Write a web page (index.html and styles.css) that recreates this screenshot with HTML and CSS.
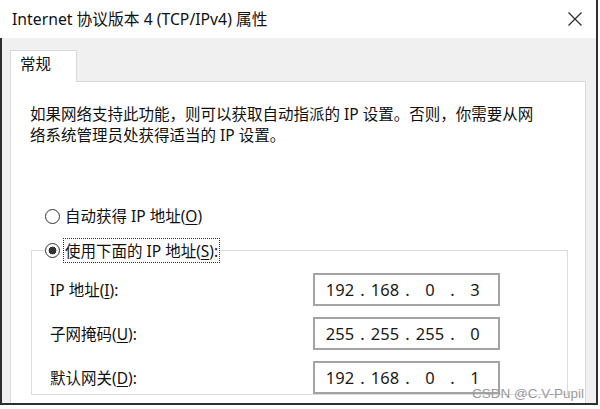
FILE: index.html
```html
<!DOCTYPE html>
<html lang="zh-CN">
<head>
<meta charset="utf-8">
<title>Internet 协议版本 4 (TCP/IPv4) 属性</title>
<link rel="stylesheet" href="styles.css">
</head>
<body>
<div class="window">
  <div class="titlebar">
    <span class="title">Internet 协议版本 4 (TCP/IPv4) 属性</span>
    <svg class="close" width="14" height="14" viewBox="0 0 14 14" aria-hidden="true">
      <path d="M0.5 0.5 L13.5 13.5 M13.5 0.5 L0.5 13.5" stroke="#2a2a2a" stroke-width="1.2" fill="none"/>
    </svg>
  </div>
  <div class="body">
    <div class="tabs"><div class="tab">常规</div></div>
    <div class="panel">
      <p class="desc">如果网络支持此功能，则可以获取自动指派的 IP 设置。否则，你需要从网<br>络系统管理员处获得适当的 IP 设置。</p>
      <div class="radio-row first">
        <span class="radio"></span><span class="radio-label">自动获得 IP 地址(<u>O</u>)</span>
      </div>
      <fieldset class="group">
        <legend class="legend">
          <span class="radio-row"><span class="radio checked"></span><span class="radio-label focus">使用下面的 IP 地址(<u>S</u>):</span></span>
        </legend>
        <div class="fields">
          <span class="field-label">IP 地址(<u>I</u>):</span>
          <div class="ip-box"><span class="oct">192</span><span class="dot">.</span><span class="oct">168</span><span class="dot">.</span><span class="oct">0</span><span class="dot">.</span><span class="oct">3</span></div>
          <span class="field-label">子网掩码(<u>U</u>):</span>
          <div class="ip-box"><span class="oct">255</span><span class="dot">.</span><span class="oct">255</span><span class="dot">.</span><span class="oct">255</span><span class="dot">.</span><span class="oct">0</span></div>
          <span class="field-label">默认网关(<u>D</u>):</span>
          <div class="ip-box"><span class="oct">192</span><span class="dot">.</span><span class="oct">168</span><span class="dot">.</span><span class="oct">0</span><span class="dot">.</span><span class="oct">1</span></div>
        </div>
      </fieldset>
    </div>
  </div>
</div>
<div class="watermark">CSDN @C.V-Pupil</div>
</body>
</html>
```
FILE: styles.css
```css
* { box-sizing: border-box; }
html, body {
  margin: 0;
  padding: 0;
}
body {
  width: 600px;
  height: 409px;
  overflow: hidden;
  background: #fff;
  font-family: "Noto Sans", "Noto Sans CJK SC", sans-serif;
  color: #111;
  position: relative;
}
.window {
  width: 598px;
  height: 405px;
  border-right: 2px solid #2e2e2e;
  display: flex;
  flex-direction: column;
}
.titlebar {
  height: 38px;
  flex: none;
  display: flex;
  align-items: center;
  justify-content: space-between;
  padding-left: 12px;
  padding-right: 14px;
  background: #fff;
}
.title {
  font-size: 15.75px;
  line-height: 20px;
  white-space: nowrap;
}
.close { display: block; }
.body {
  flex: 1;
  background: #f0f0f0;
  border-left: 2px solid #2e2e2e;
  border-bottom: 2px solid #2e2e2e;
  padding: 12px 0 0 8px;
  overflow: hidden;
}
.tabs {
  display: flex;
}
.tab {
  width: 67px;
  height: 32px;
  background: #fff;
  border: 1px solid #d9d9d9;
  border-bottom: none;
  margin-bottom: -1px;
  padding: 2px 0 0 9px;
  font-size: 15.5px;
  line-height: 22px;
  position: relative;
  z-index: 1;
}
.panel {
  width: 576px;
  height: 420px;
  background: #fff;
  border: 1px solid #d9d9d9;
  padding: 22px 0 0 19px;
}
.desc {
  margin: 0;
  font-size: 15.5px;
  line-height: 21px;
  white-space: nowrap;
}
.radio-row {
  display: flex;
  align-items: center;
  font-size: 15.5px;
  line-height: 22px;
  white-space: nowrap;
}
.radio-row.first {
  margin-top: 59px;
  padding-left: 15px;
}
.radio {
  width: 15px;
  height: 15px;
  border: 1px solid #333;
  border-radius: 50%;
  flex: none;
  background: #fff;
}
.radio.checked {
  background: radial-gradient(circle, #333 0 3.6px, #fff 4.2px);
}
.radio-label {
  margin-left: 5px;
}
.radio-label u, .field-label u {
  text-decoration-thickness: 1px;
  text-underline-offset: 2px;
}
.radio-label.focus {
  margin-left: 3px;
  border: 1px dotted #333;
  padding: 1px 1px 0 1px;
  line-height: 22px;
}
.group {
  margin: 11px 0 0 1px;
  width: 537px;
  min-width: 0;
  border: 1px solid #dcdcdc;
  padding: 0;
}
.legend {
  margin-left: 13px;
  padding: 0;
}
.fields {
  display: grid;
  grid-template-columns: 263px 187px;
  grid-auto-rows: 33px;
  row-gap: 11px;
  align-items: center;
  padding: 10px 0 0 18px;
}
.field-label {
  font-size: 15.5px;
  line-height: 22px;
  white-space: nowrap;
}
.ip-box {
  height: 33px;
  border: 2px solid #a3a3a3;
  padding-left: 7px;
  display: flex;
  align-items: center;
  font-size: 16.5px;
  line-height: 13px;
  color: #1a1a1a;
}
.oct {
  width: 36px;
  text-align: center;
}
.dot {
  width: 9px;
  text-align: center;
}
.watermark {
  position: absolute;
  left: 472px;
  top: 388px;
  font-family: "Liberation Sans", Arial, sans-serif;
  font-size: 13.5px;
  line-height: 11px;
  color: #9a9a9a;
  white-space: nowrap;
}
```
